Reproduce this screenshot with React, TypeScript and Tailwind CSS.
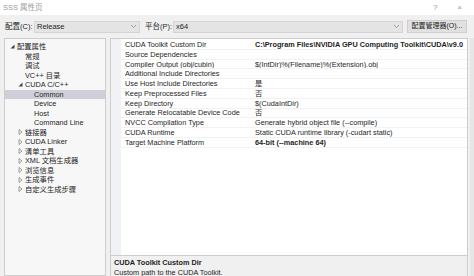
import React from "react";

const font = { fontFamily: '"Liberation Sans", "Noto Sans CJK SC", sans-serif' };

interface Prop {
    name: string;
    value: string;
    bold?: boolean;
}

const props: Prop[] = [
    { name: "CUDA Toolkit Custom Dir", value: "C:\\Program Files\\NVIDIA GPU Computing Toolkit\\CUDA\\v9.0", bold: true },
    { name: "Source Dependencies", value: "" },
    { name: "Compiler Output (obj/cubin)", value: "$(IntDir)%(Filename)%(Extension).obj" },
    { name: "Additional Include Directories", value: "" },
    { name: "Use Host Include Directories", value: "是" },
    { name: "Keep Preprocessed Files", value: "否" },
    { name: "Keep Directory", value: "$(CudaIntDir)" },
    { name: "Generate Relocatable Device Code", value: "否" },
    { name: "NVCC Compilation Type", value: "Generate hybrid object file (--compile)" },
    { name: "CUDA Runtime", value: "Static CUDA runtime library (-cudart static)" },
    { name: "Target Machine Platform", value: "64-bit (--machine 64)", bold: true },
];

interface TreeItem {
    label: string;
    indent: number;
    arrow?: "open" | "closed";
    selected?: boolean;
}

const tree: TreeItem[] = [
    { label: "配置属性", indent: 0, arrow: "open" },
    { label: "常规", indent: 1 },
    { label: "调试", indent: 1 },
    { label: "VC++ 目录", indent: 1 },
    { label: "CUDA C/C++", indent: 1, arrow: "open" },
    { label: "Common", indent: 2, selected: true },
    { label: "Device", indent: 2 },
    { label: "Host", indent: 2 },
    { label: "Command Line", indent: 2 },
    { label: "链接器", indent: 1, arrow: "closed" },
    { label: "CUDA Linker", indent: 1, arrow: "closed" },
    { label: "清单工具", indent: 1, arrow: "closed" },
    { label: "XML 文档生成器", indent: 1, arrow: "closed" },
    { label: "浏览信息", indent: 1, arrow: "closed" },
    { label: "生成事件", indent: 1, arrow: "closed" },
    { label: "自定义生成步骤", indent: 1, arrow: "closed" },
];

function Chevron() {
    return (
        <svg width="7" height="5" viewBox="0 0 7 5" className="text-[#888]">
            <path d="M1 1 L3.5 3.5 L6 1" fill="none" stroke="currentColor" strokeWidth="0.8" />
        </svg>
    );
}

function Arrow({ kind }: { kind: "open" | "closed" }) {
    if (kind === "open") {
        return (
            <svg width="5" height="5" viewBox="0 0 5 5">
                <path d="M4.5 0.5 L4.5 4.5 L0.5 4.5 Z" fill="#444" />
            </svg>
        );
    }
    return (
        <svg width="5" height="6" viewBox="0 0 5 6">
            <path d="M1 0.5 L4 3 L1 5.5 Z" fill="none" stroke="#777" strokeWidth="0.7" />
        </svg>
    );
}

export default function App() {
    return (
        <div className="w-[474px] h-[276px] bg-[#f0f0f0] overflow-hidden flex flex-col text-[#1e1e1e]" style={font}>
            {/* Title bar */}
            <div className="h-[15px] bg-white flex items-center justify-between pl-[3px] pr-[12px]">
                <span className="text-[7.5px] text-[#9a9a9a]">SSS 属性页</span>
                <div className="flex items-center gap-[20px] text-[8px] text-[#999]">
                    <span>?</span>
                    <span>×</span>
                </div>
            </div>

            {/* Config row */}
            <div className="h-[23px] flex items-center pl-[5px] pr-[8px] text-[7.5px]">
                <span className="w-[29px] shrink-0">配置(C):</span>
                <div className="w-[106px] shrink-0 h-[12px] bg-[#e4e4e4] border border-[#d4d4d4] flex items-center justify-between pl-[2px] pr-[2px]">
                    <span>Release</span>
                    <Chevron />
                </div>
                <span className="ml-[5px] w-[28px] shrink-0">平台(P):</span>
                <div className="w-[230px] shrink-0 h-[12px] bg-[#e4e4e4] border border-[#d4d4d4] flex items-center justify-between pl-[2px] pr-[2px]">
                    <span>x64</span>
                    <Chevron />
                </div>
                <div className="ml-[4px] w-[60px] shrink-0 h-[13px] bg-[#e1e1e1] border border-[#cfcfcf] flex items-center justify-center text-[7px]">
                    配置管理器(O)...
                </div>
            </div>

            {/* Main */}
            <div className="flex-1 flex pl-[4px] min-h-0">
                {/* Tree */}
                <div className="w-[102px] shrink-0 bg-[#f7f7f7] border border-[#cdcdcd] pt-[3px] text-[7.3px]">
                    {tree.map((t) => (
                        <div
                            key={t.label}
                            className={`h-[9.5px] leading-[9.5px] flex items-center ${t.selected ? "bg-[#cfcfd9]" : ""}`}
                            style={{ paddingLeft: 5 + t.indent * 8 }}
                        >
                            <span className="w-[7px] flex items-center">{t.arrow && <Arrow kind={t.arrow} />}</span>
                            <span className={t.indent === 2 ? "ml-[1px]" : ""}>{t.label}</span>
                        </div>
                    ))}
                </div>

                {/* Property grid */}
                <div className="ml-[4px] w-[358px] shrink-0 flex flex-col">
                    <div className="flex-1 bg-white border border-[#cdcdcd] flex">
                        <div className="w-[10px] shrink-0 bg-[#f0f2f6]" />
                        <div className="flex-1 min-w-0 pt-[1px] text-[7.3px]">
                            {props.map((p) => (
                                <div key={p.name} className="h-[9.8px] leading-[9px] flex items-center border-b border-[#f2f2f2] overflow-hidden">
                                    <span className="w-[134px] shrink-0 pl-[4px] whitespace-nowrap">{p.name}</span>
                                    <span className={`whitespace-nowrap ${p.bold ? "font-bold" : ""}`}>{p.value}</span>
                                </div>
                            ))}
                        </div>
                    </div>
                    <div className="h-[20px] bg-[#f0f0f0] border-x border-[#cdcdcd] pl-[3px] pt-[2px] text-[7.3px] leading-[10px]">
                        <div className="font-bold">CUDA Toolkit Custom Dir</div>
                        <div>Custom path to the CUDA Toolkit.</div>
                    </div>
                </div>
                <div className="flex-1 bg-[#e6e6e6] ml-[2px]" />
            </div>
        </div>
    );
}
